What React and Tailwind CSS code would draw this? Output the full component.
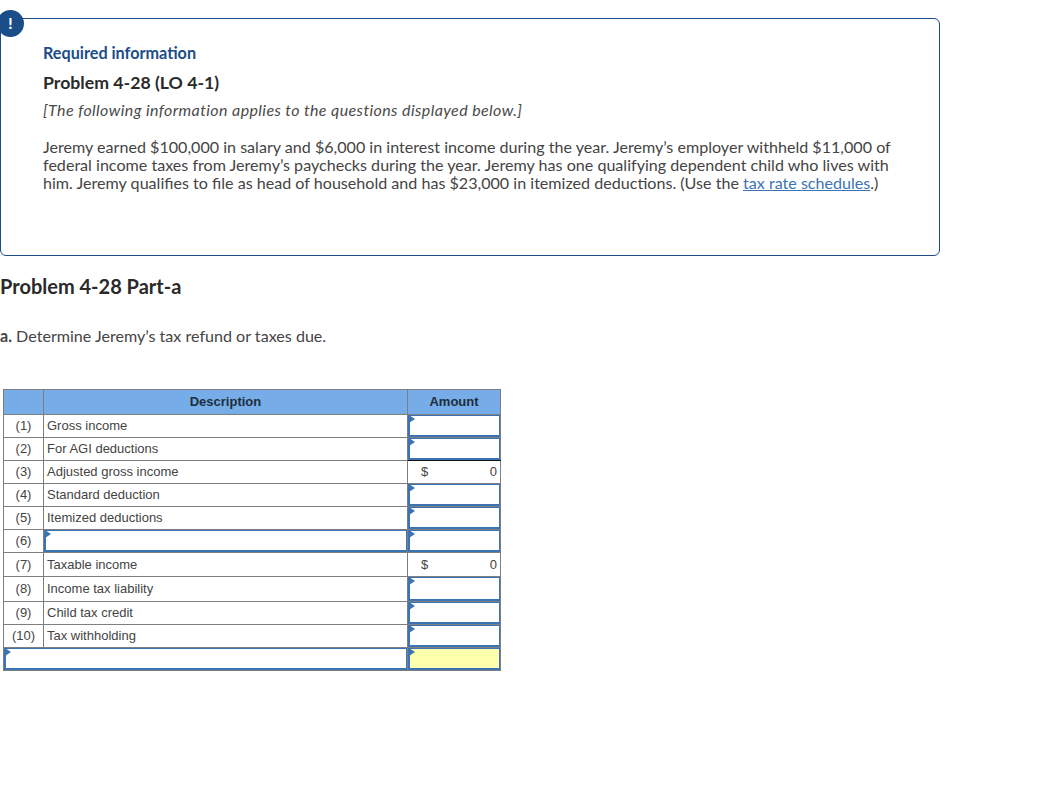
const rows = [
  { num: '(1)', label: 'Gross income', h: 'h-[23px]', amount: 'input' },
  { num: '(2)', label: 'For AGI deductions', h: 'h-[23px]', amount: 'input', line: 'border-b-[#111]' },
  { num: '(3)', label: 'Adjusted gross income', h: 'h-[23px]', amount: 'total' },
  { num: '(4)', label: 'Standard deduction', h: 'h-[23px]', amount: 'input' },
  { num: '(5)', label: 'Itemized deductions', h: 'h-[23px]', amount: 'input' },
  { num: '(6)', label: null, h: 'h-[23px]', amount: 'input' },
  { num: '(7)', label: 'Taxable income', h: 'h-[24px]', amount: 'total' },
  { num: '(8)', label: 'Income tax liability', h: 'h-[25px]', amount: 'input' },
  { num: '(9)', label: 'Child tax credit', h: 'h-[23px]', amount: 'input' },
  { num: '(10)', label: 'Tax withholding', h: 'h-[23px]', amount: 'input' },
];

function InputCell({ yellow }) {
  return (
    <div className={`relative h-full w-full border border-b-2 border-l-2 border-[#3b73b4] ${yellow ? 'bg-[#ffffac]' : 'bg-white'}`}>
      <span className="absolute -left-[1px] -top-[1px] h-0 w-0 border-y-[4px] border-l-[6px] border-y-transparent border-l-[#3b73b4]"></span>
    </div>
  );
}

export default function App() {
  return (
    <div className="min-h-[793px] bg-white pt-[18px] text-[#2f2f2f] font-['Lato',sans-serif]">
      <div className="relative h-[238px] w-[940px] rounded-md border border-[#1b4d89] pl-[42px] pt-[24px]">
        <div className="absolute -left-[4px] -top-[9px] flex h-[27px] w-[27px] items-center justify-center rounded-full bg-[#1b4d89] text-[15px] font-black text-white">
          !
        </div>
        <h2 className="text-[16.2px] leading-[20px] font-bold text-[#1b4d89]">Required information</h2>
        <h3 className="mt-[10px] text-[17.7px] leading-[20px] font-bold text-[#2a2a2a]">Problem 4-28 (LO 4-1)</h3>
        <p className="mt-[7px] text-[16px] leading-[20px] tracking-[0.4px] italic text-[#4a4a4a]">
          [The following information applies to the questions displayed below.]
        </p>
        <p className="mt-[18px] w-[860px] text-[16.1px] leading-[18px] text-[#444]">
          Jeremy earned $100,000 in salary and $6,000 in interest income during the year. Jeremy’s employer withheld $11,000 of federal income taxes from Jeremy’s paychecks during the year. Jeremy has one qualifying dependent child who lives with him. Jeremy qualifies to file as head of household and has $23,000 in itemized deductions. (Use the <a className="text-[#3b73b4] underline">tax rate schedules</a>.)
        </p>
      </div>

      <h2 className="mt-[18px] text-[20px] leading-[24px] font-bold text-[#2a2a2a]">Problem 4-28 Part-a</h2>
      <p className="mt-[27px] text-[16.1px] leading-[22px] text-[#444]">
        <strong>a.</strong> Determine Jeremy’s tax refund or taxes due.
      </p>

      <table className="ml-[3px] mt-[42px] w-[497px] table-fixed border-collapse font-['Liberation_Sans',sans-serif] text-[13px] text-[#444]">
        <colgroup>
          <col className="w-[40px]" />
          <col className="w-[364px]" />
          <col className="w-[93px]" />
        </colgroup>
        <thead>
          <tr className="h-[25px] bg-[#76ade8] font-bold text-[#1f2d3d]">
            <th className="border border-[#7f7f7f]"></th>
            <th className="border border-[#7f7f7f] text-center font-bold">Description</th>
            <th className="border border-[#7f7f7f] text-center font-bold">Amount</th>
          </tr>
        </thead>
        <tbody>
          {rows.map(r => (
            <tr key={r.num}>
              <td className={`${r.h} border border-[#7f7f7f] p-0 text-center`}>{r.num}</td>
              {r.label ? (
                <td className={`${r.h} border border-[#7f7f7f] p-0 pl-[3px]`}>{r.label}</td>
              ) : (
                <td className={`${r.h} border border-[#7f7f7f] p-0`}><InputCell /></td>
              )}
              <td className={`${r.h} border border-[#7f7f7f] p-0 ${r.line || ''}`}>
                {r.amount === 'input' ? (
                  <InputCell />
                ) : (
                  <div className="flex justify-between pl-[13px] pr-[3px]"><span>$</span><span>0</span></div>
                )}
              </td>
            </tr>
          ))}
          <tr>
            <td colSpan={2} className="h-[23px] border border-[#7f7f7f] p-0"><InputCell /></td>
            <td className="h-[23px] border border-[#7f7f7f] p-0"><InputCell yellow /></td>
          </tr>
        </tbody>
      </table>
    </div>
  );
}
